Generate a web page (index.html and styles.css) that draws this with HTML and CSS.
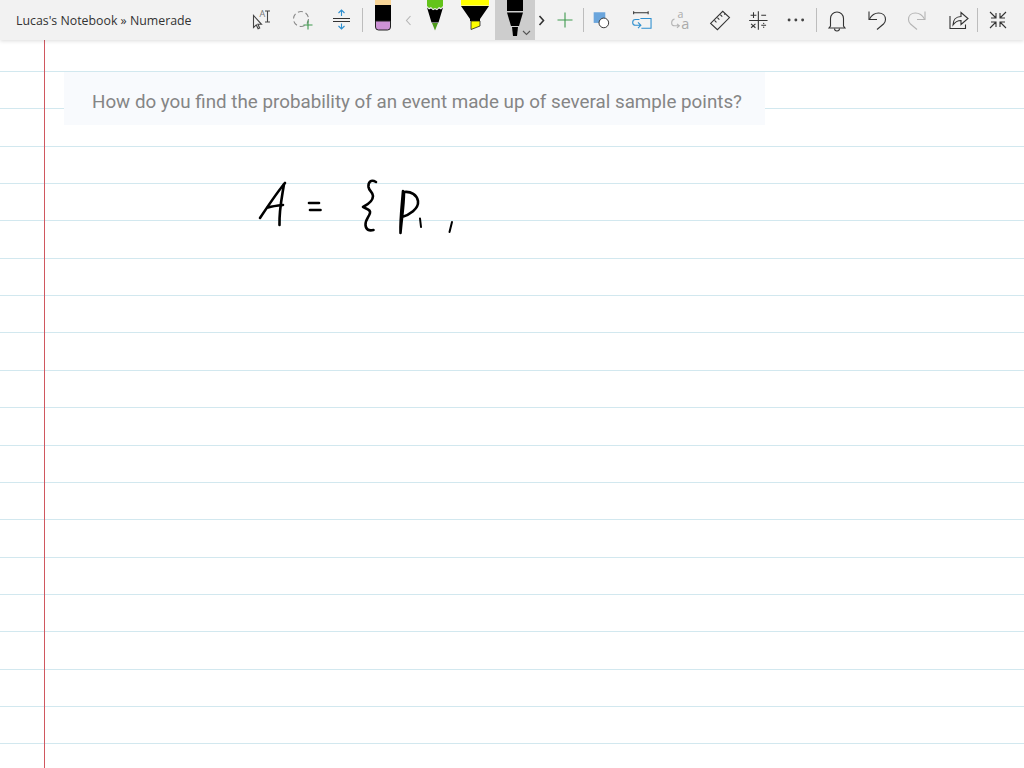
FILE: index.html
```html
<!DOCTYPE html>
<html lang="en">
<head>
    <meta charset="UTF-8">
    <meta name="viewport" content="width=device-width, initial-scale=1.0">
    <title>Lucas's Notebook - Numerade</title>
    <link rel="stylesheet" href="styles.css">
</head>
<body>
    <header class="toolbar">
        <div class="title">Lucas's Notebook » Numerade</div>

        <div class="tool">
            <svg viewBox="0 0 40 40" class="icon">
                <path d="M11.5 15.5v12l2.8-2.6 1.8 3.9 1.6-.8-1.8-3.700h3.600z" class="line"/>
                <text x="17.500" y="17" class="mini">A</text>
                <path d="M23 11h5M23 22h5M25.500 11v11" class="line"/>
            </svg>
        </div>
        <div class="tool">
            <svg viewBox="0 0 40 40" class="icon">
                <circle cx="19" cy="19" r="7.500" class="line dashed"/>
                <path d="M26 20.500v9M21.500 25h9" class="line green"/>
            </svg>
        </div>
        <div class="tool">
            <svg viewBox="0 0 40 40" class="icon">
                <path d="M11 18.500h17M11 21.500h17" class="line dark"/>
                <path d="M19.500 10.500v5.500M16.500 13l3-3 3 3M19.500 23.500v5.500M16.500 26l3 3 3-3" class="line blue"/>
            </svg>
        </div>
        <div class="sep"></div>

        <div class="tool">
            <svg viewBox="0 0 40 40" class="icon">
                <rect x="12" y="0" width="16" height="6" fill="#f8d598"/>
                <rect x="12" y="5" width="16" height="16" fill="#000"/>
                <path d="M12.500 21h15v6a3 3 0 0 1-3 3h-9a3 3 0 0 1-3-3z" fill="#cd92d6" stroke="#222" stroke-width="1"/>
            </svg>
        </div>
        <div class="tool tool-chevron">
            <svg viewBox="0 0 12 40" class="icon">
                <path d="M7.500 16l-4 4.500 4 4.500" class="line pale"/>
            </svg>
        </div>
        <div class="tool">
            <svg viewBox="0 0 40 40" class="icon">
                <path d="M12 0h16v6l-2 2-2-1-2 2-2-1-2 1-2-2-2 1-2-2z" fill="#63c31a"/>
                <path d="M12 7.500l2 2 2-1 2 1.800 2-1 2 1 2-1.800 2 1 2-2-4.500 15h-7z" fill="#000"/>
                <path d="M17 23h6l-3 7.500z" fill="#4f9d1e"/>
            </svg>
        </div>
        <div class="tool">
            <svg viewBox="0 0 40 40" class="icon">
                <rect x="6" y="0" width="28" height="5.500" fill="#ffff00"/>
                <path d="M6 6h28l-9 13v2h-10v-2z" fill="#000"/>
                <path d="M16 21h9v5l-9 3.500z" fill="#ffff00" stroke="#222" stroke-width=".8"/>
            </svg>
        </div>
        <div class="tool tool-selected">
            <svg viewBox="0 0 40 40" class="icon">
                <rect x="12" y="0" width="16" height="11" fill="#000"/>
                <path d="M12 12.500h16l-4 13.500h-8z" fill="#000"/>
                <path d="M17 27h6l-1 9h-4z" fill="#000"/>
                <path d="M28 31l3.500 3.500 3.500-3.500" class="line dark-soft"/>
            </svg>
        </div>
        <div class="tool tool-next">
            <svg viewBox="0 0 14 40" class="icon">
                <path d="M4.500 16l4 4.500-4 4.500" class="line thick"/>
            </svg>
        </div>
        <div class="tool tool-add">
            <svg viewBox="0 0 32 40" class="icon">
                <path d="M16 12.500v15M8.500 20h15" class="line green"/>
            </svg>
        </div>
        <div class="sep"></div>

        <div class="tool tool-tight">
            <svg viewBox="0 0 40 40" class="icon">
                <rect x="10" y="12" width="12" height="11" fill="#6aa5dc"/>
                <circle cx="20.500" cy="23" r="5" fill="#fff" stroke="#333" stroke-width="1"/>
            </svg>
        </div>
        <div class="tool tool-tight">
            <svg viewBox="0 0 40 40" class="icon">
                <path d="M11 12.500h15M11 11v3M26 11v3" class="line dark"/>
                <path d="M18 18.500h11v10h-10" class="line blue"/>
                <path d="M17 19.500h-4a2.500 2.500 0 0 0 0 6h5M15.500 22.500l3 3-3 3" class="line blue"/>
            </svg>
        </div>
        <div class="tool tool-tight">
            <svg viewBox="0 0 40 40" class="icon">
                <text x="17" y="18" class="glyph-small">a</text>
                <text x="21" y="29" class="glyph-large">a</text>
                <path d="M14 19a4 4 0 0 0-3 4 3 3 0 0 0 3 3h5M16.500 24l2.500 2-2.500 2" class="line pale"/>
            </svg>
        </div>
        <div class="tool tool-tight">
            <svg viewBox="0 0 40 40" class="icon">
                <path d="M11 23.500L23.500 11l7 6.500L18 30z" class="line dark"/>
                <path d="M15 20.500l2 2M18 17.500l2 2M21 14.500l2 2M25 13.500l1 1" class="line dark"/>
            </svg>
        </div>
        <div class="tool tool-tight">
            <svg viewBox="0 0 40 40" class="icon">
                <path d="M20 11v19M10.500 20.500h19" class="line dark"/>
                <path d="M12 15h6M15 12v6M23 15h5M12.500 24l4.500 4M17 24l-4.500 4M23 25.500h5" class="line dark"/>
                <circle cx="25.500" cy="23.500" r=".7" fill="#444"/>
                <circle cx="25.500" cy="27.500" r=".7" fill="#444"/>
            </svg>
        </div>
        <div class="tool tool-tight">
            <svg viewBox="0 0 40 40" class="icon">
                <circle cx="12.500" cy="20" r="1.500" fill="#444"/>
                <circle cx="19.500" cy="20" r="1.500" fill="#444"/>
                <circle cx="26.500" cy="20" r="1.500" fill="#444"/>
            </svg>
        </div>
        <div class="sep"></div>

        <div class="tool">
            <svg viewBox="0 0 40 40" class="icon">
                <path d="M13.500 26v-7.500a6.500 6.500 0 0 1 13 0V26l1.500 2h-16z" class="line dark"/>
                <path d="M17.500 28.500a2.500 2.500 0 0 0 5 0" class="line dark"/>
            </svg>
        </div>
        <div class="tool">
            <svg viewBox="0 0 40 40" class="icon">
                <path d="M12 11.500v8h8" class="line dark"/>
                <path d="M12.500 19C15 14.500 18 13 21.500 13c4.500 0 7 3 7 6.500 0 2-1 3.500-2 4.500l-6.500 5.500" class="line dark"/>
            </svg>
        </div>
        <div class="tool">
            <svg viewBox="0 0 40 40" class="icon">
                <path d="M28 11.500v8h-8" class="line pale"/>
                <path d="M27.500 19C25 14.500 22 13 18.500 13c-4.500 0-7 3-7 6.500 0 2 1 3.500 2 4.500l6.500 5.500" class="line pale"/>
            </svg>
        </div>
        <div class="tool">
            <svg viewBox="0 0 40 40" class="icon">
                <path d="M13 16v12.500h15.500v-4" class="line dark"/>
                <path d="M16 25c0-5 3-8.500 8-8.500V12.500l7 6-7 6v-4c-3.500 0-6 1.500-8 4.500z" class="line dark"/>
            </svg>
        </div>
        <div class="sep"></div>

        <div class="tool">
            <svg viewBox="0 0 40 40" class="icon">
                <path d="M12 12l6 6M18 13v5h-5M28 12l-6 6M22 13v5h5M12 28l6-6M18 27v-5h-5M28 28l-6-6M22 27v-5h5" class="line dark"/>
            </svg>
        </div>
    </header>

    <main class="page">
        <div class="question">How do you find the probability of an event made up of several sample points?</div>

        <!-- handwriting on the page -->
        <svg class="ink" viewBox="0 0 1024 728">
            <g transform="translate(0 -40)">
                <path d="M285 183C278 191 268 206 260 218"/>
                <path d="M284 184C282 197 279 210 279.500 225"/>
                <path d="M268 207.500C273 206 278 205.500 283 205"/>
                <path d="M309 203h10"/>
                <path d="M310 210h10.500"/>
                <path d="M376 182C371 179 368 182 368.500 187C369 191 373 192 373 196C373 201 367 205 363 207C366 209 371 209 370 213C369 217 365 220 365.500 225C366 230 369 231 373.500 230"/>
                <path d="M403 191C402 204 400 220 400.500 233C401.500 220 404 205 404 192C411 191 417 195 418 201C419 209 409 215 402 217"/>
                <path d="M420 218.500L421 227" class="ink-thin"/>
                <path d="M452 222L449.500 232" class="ink-thin"/>
            </g>
        </svg>
    </main>
</body>
</html>
```

FILE: styles.css
```css
/* OneNote style notebook page */
body {
    margin: 0;
    height: 768px;
    overflow: hidden;
    background-color: #fff;
    font-family: "Open Sans", sans-serif;
}
.toolbar {
    height: 40px;
    display: flex;
    align-items: stretch;
    background-color: #f2f2f2;
    box-shadow: 0 1px 4px rgba(0,0,0,0.14);
    position: relative;
    z-index: 1;
}
.title {
    width: 226px;
    padding-left: 16px;
    font-size: 12.35px;
    line-height: 41px;
    color: #333;
    white-space: nowrap;
}
.tool {
    width: 40px;
    flex-shrink: 0;
}
.tool-tight {
    width: 38.7px;
}
.tool-chevron {
    width: 12px;
}
.tool-next {
    width: 14px;
}
.tool-add {
    width: 32px;
    margin-right: 2px;
}
.tool-selected {
    background-color: #cdcdcd;
}
.icon {
    display: block;
    width: 100%;
    height: 40px;
}
.sep {
    width: 1px;
    margin: 8px 0;
    background-color: #bdbdbd;
    flex-shrink: 0;
}
.line {
    fill: none;
    stroke: #444;
    stroke-width: 1.1;
}
.dark {
    stroke: #333;
}
.dark-soft {
    stroke: #555;
}
.thick {
    stroke: #333;
    stroke-width: 1.6;
}
.dashed {
    stroke: #888;
    stroke-dasharray: 5 3;
}
.green {
    stroke: #3f9a4e;
}
.blue {
    stroke: #2e8fcf;
}
.pale {
    stroke: #b5b5b5;
}
.mini {
    font-family: "Open Sans", sans-serif;
    font-size: 9px;
    fill: #777;
}
.glyph-small {
    font-family: "Open Sans", sans-serif;
    font-size: 11px;
    fill: #aaa;
}
.glyph-large {
    font-family: "Open Sans", sans-serif;
    font-size: 15px;
    fill: #aaa;
}

/* ruled paper: red margin over blue lines */
.page {
    position: relative;
    height: 728px;
    padding-top: 32px;
    box-sizing: border-box;
    background-color: #fff;
    background-image:
        linear-gradient(#d0575f, #d0575f),
        repeating-linear-gradient(to bottom, #d2e8ef 0, #d2e8ef 1px, transparent 1px, transparent 37.35px);
    background-size: 1px 100%, 100% 100%;
    background-position: 44px 0, 0 31px;
    background-repeat: no-repeat, no-repeat;
}
.question {
    width: 673px;
    height: 53px;
    margin-left: 64px;
    padding-left: 28px;
    line-height: 60px;
    font-family: Roboto, sans-serif;
    font-size: 18.8px;
    color: #858585;
    white-space: nowrap;
    background-color: #f8fafd;
}
.ink {
    position: absolute;
    left: 0;
    top: 0;
    width: 1024px;
    height: 728px;
    fill: none;
    stroke: #000;
    stroke-width: 2.6;
    stroke-linecap: round;
    stroke-linejoin: round;
}
.ink-thin {
    stroke-width: 2;
}
```
